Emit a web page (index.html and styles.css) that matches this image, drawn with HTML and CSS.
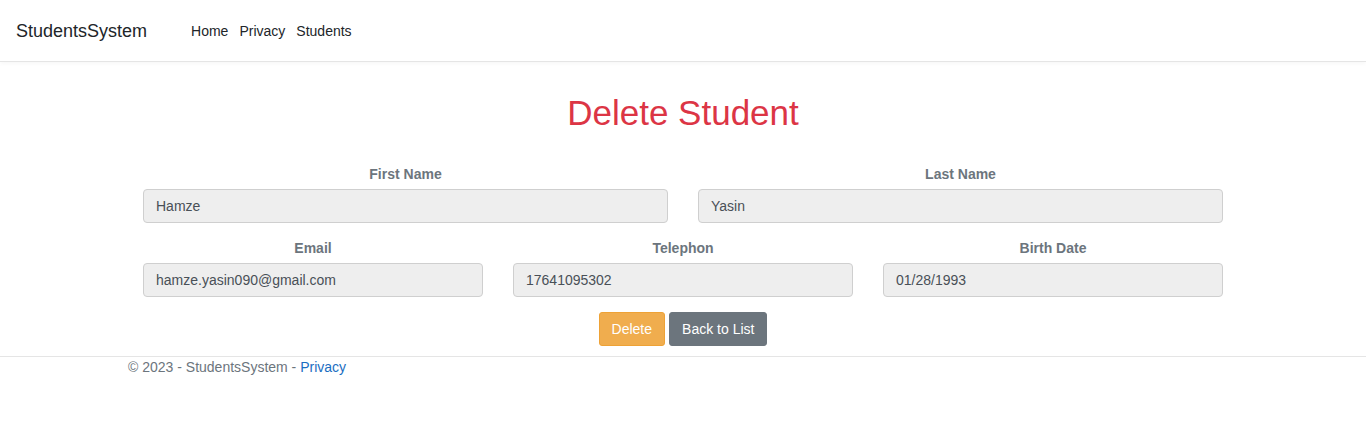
FILE: index.html
```html
<!DOCTYPE html>
<html lang="en">
<head>
<meta charset="utf-8">
<title>Delete Student - StudentsSystem</title>
<link rel="stylesheet" href="styles.css">
</head>
<body>
<header class="site-header">
  <nav class="navbar">
    <a class="brand" href="#">StudentsSystem</a>
    <ul class="nav-links">
      <li><a href="#">Home</a></li>
      <li><a href="#">Privacy</a></li>
      <li><a href="#">Students</a></li>
    </ul>
  </nav>
</header>
<main class="container">
  <h1 class="page-title">Delete Student</h1>
  <form class="student-form">
    <div class="form-row two">
      <div class="form-group">
        <label>First Name</label>
        <input class="form-control" type="text" value="Hamze" readonly>
      </div>
      <div class="form-group">
        <label>Last Name</label>
        <input class="form-control" type="text" value="Yasin" readonly>
      </div>
    </div>
    <div class="form-row three">
      <div class="form-group">
        <label>Email</label>
        <input class="form-control" type="text" value="hamze.yasin090@gmail.com" readonly>
      </div>
      <div class="form-group">
        <label>Telephon</label>
        <input class="form-control" type="text" value="17641095302" readonly>
      </div>
      <div class="form-group">
        <label>Birth Date</label>
        <input class="form-control" type="text" value="01/28/1993" readonly>
      </div>
    </div>
    <div class="actions">
      <button type="button" class="btn btn-warning">Delete</button>
      <a class="btn btn-secondary" href="#">Back to List</a>
    </div>
  </form>
</main>
<footer class="site-footer">
  <div class="container footer-inner">&copy; 2023 - StudentsSystem - <a href="#">Privacy</a></div>
</footer>
</body>
</html>
```
FILE: styles.css
```css
* { box-sizing: border-box; }
html { font-size: 14px; }
body {
  margin: 0;
  font-family: "Liberation Sans", Arial, sans-serif;
  font-size: 14px;
  line-height: 1.5;
  color: #212529;
  background: #fff;
}
a { text-decoration: none; }

.site-header {
  border-bottom: 1px solid #e5e5e5;
  box-shadow: 0 2px 4px rgba(0,0,0,0.03);
}
.navbar {
  height: 61px;
  display: flex;
  align-items: center;
  padding: 0 16px;
}
.brand {
  font-size: 18px;
  color: #212529;
  margin-right: 44px;
  padding-top: 2px;
}
.nav-links {
  list-style: none;
  margin: 0;
  padding: 0;
  display: flex;
  gap: 11px;
  padding-top: 1px;
}
.nav-links a { color: #212529; }

.container {
  width: 1110px;
  margin: 0 auto;
}
.page-title {
  margin: 30px 0 30px;
  text-align: center;
  font-size: 35px;
  line-height: 1.2;
  font-weight: 400;
  color: #dc3545;
}
.student-form { padding: 0 15px; }
.form-row {
  display: grid;
  column-gap: 30px;
}
.form-row.two { grid-template-columns: 1fr 1fr; }
.form-row.three { grid-template-columns: 1fr 1fr 1fr; }
.form-group {
  display: flex;
  flex-direction: column;
  margin-bottom: 15px;
}
.form-group label {
  text-align: center;
  font-weight: 700;
  color: #6c757d;
  margin-bottom: 4px;
}
.form-control {
  height: 34px;
  padding: 0 12px;
  font-family: inherit;
  font-size: 14px;
  color: #495057;
  background: #eeeeee;
  border: 1px solid #cfcfcf;
  border-radius: 4px;
}
.actions {
  display: flex;
  justify-content: center;
  gap: 4px;
  margin-bottom: 10px;
}
.btn {
  display: inline-block;
  height: 34px;
  padding: 0 12px;
  font-family: inherit;
  font-size: 14px;
  line-height: 32px;
  color: #fff;
  border: 1px solid transparent;
  border-radius: 3px;
  cursor: pointer;
}
.btn-warning { background: #f0ad4e; border-color: #eea236; }
.btn-secondary { background: #6c757d; border-color: #6c757d; }

.site-footer {
  border-top: 1px solid #e5e5e5;
  color: #6c757d;
}
.footer-inner { line-height: 21px; }
.site-footer a { color: #1b6ec2; }
```
